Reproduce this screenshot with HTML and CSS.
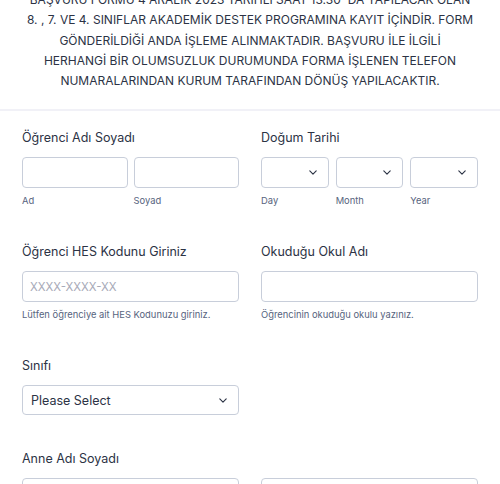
FILE: index.html
```html
<!doctype html>
<html>
	<head>
		<meta charset="utf-8">
		<link rel="stylesheet" href="styles.css">
	</head>
	<body>
		<div class="intro">
			<p>BAŞVURU FORMU 4 ARALIK 2023 TARİHLİ SAAT 13.30' DA YAPILACAK OLAN<br>8. , 7. VE 4. SINIFLAR AKADEMİK DESTEK PROGRAMINA KAYIT İÇİNDİR. FORM<br>GÖNDERİLDİĞİ ANDA İŞLEME ALINMAKTADIR. BAŞVURU İLE İLGİLİ<br>HERHANGİ BİR OLUMSUZLUK DURUMUNDA FORMA İŞLENEN TELEFON<br>NUMARALARINDAN KURUM TARAFINDAN DÖNÜŞ YAPILACAKTIR.</p>
		</div>
		<div class="form">
			<div class="row">
				<div class="field">
					<label class="label">Öğrenci Adı Soyadı</label>
					<div class="pair">
						<div>
							<div class="box"></div>
							<span class="sub">Ad</span>
						</div>
						<div>
							<div class="box"></div>
							<span class="sub">Soyad</span>
						</div>
					</div>
				</div>
				<div class="field">
					<label class="label">Doğum Tarihi</label>
					<div class="trio">
						<div>
							<div class="box select"><svg class="chev" viewBox="0 0 10 6"><path d="M1 1l4 4 4-4"/></svg></div>
							<span class="sub">Day</span>
						</div>
						<div>
							<div class="box select"><svg class="chev" viewBox="0 0 10 6"><path d="M1 1l4 4 4-4"/></svg></div>
							<span class="sub">Month</span>
						</div>
						<div>
							<div class="box select"><svg class="chev" viewBox="0 0 10 6"><path d="M1 1l4 4 4-4"/></svg></div>
							<span class="sub">Year</span>
						</div>
					</div>
				</div>
			</div>
			<div class="row">
				<div class="field">
					<label class="label">Öğrenci HES Kodunu Giriniz</label>
					<div class="box"><span class="placeholder">XXXX-XXXX-XX</span></div>
					<span class="sub">Lütfen öğrenciye ait HES Kodunuzu giriniz.</span>
				</div>
				<div class="field">
					<label class="label">Okuduğu Okul Adı</label>
					<div class="box"></div>
					<span class="sub">Öğrencinin okuduğu okulu yazınız.</span>
				</div>
			</div>
			<div class="row">
				<div class="field">
					<label class="label">Sınıfı</label>
					<div class="box select wide"><span class="value">Please Select</span><svg class="chev" viewBox="0 0 10 6"><path d="M1 1l4 4 4-4"/></svg></div>
				</div>
			</div>
			<div class="row">
				<div class="field">
					<label class="label">Anne Adı Soyadı</label>
					<div class="box"></div>
				</div>
				<div class="field">
					<label class="label">&nbsp;</label>
					<div class="box"></div>
				</div>
			</div>
		</div>
	</body>
</html>
```

FILE: styles.css
```css
body
{
	margin: 0;
	font-family: Inter, "Noto Sans", sans-serif;
	color: #2c3345;
	background-color: #ffffff;
	overflow: hidden;
}

.intro
{
	margin-top: -10px;
	padding: 0 12px 18px 12px;
	border-bottom: 2px solid #f1f1f7;
}

.intro p
{
	margin: 0;
	font-size: 12px;
	line-height: 20.3px;
	text-align: center;
}

.form
{
	padding: 17px 22px 0 22px;
}

.row
{
	display: grid;
	grid-template-columns: 1fr 1fr;
	column-gap: 22px;
	margin-bottom: 34px;
}

.field
{
	display: flex;
	flex-direction: column;
}

.label
{
	font-size: 12.5px;
	font-weight: 400;
	line-height: 20px;
	margin-bottom: 9px;
}

.pair
{
	display: grid;
	grid-template-columns: 1fr 1fr;
	column-gap: 6px;
}

.trio
{
	display: grid;
	grid-template-columns: 1fr 1fr 1fr;
	column-gap: 7px;
}

.box
{
	box-sizing: border-box;
	height: 31px;
	border: 1px solid #c8ceda;
	border-radius: 4px;
	background-color: #ffffff;
	display: flex;
	align-items: center;
	padding: 0 7px;
}

.select
{
	justify-content: flex-end;
	padding-right: 11px;
}

.wide
{
	justify-content: space-between;
	height: 30px;
	padding-left: 8px;
}

.chev
{
	width: 8px;
	height: 5px;
	fill: none;
	stroke: #2c3345;
	stroke-width: 1.4;
	stroke-linecap: round;
	stroke-linejoin: round;
}

.placeholder
{
	font-size: 11.4px;
	color: #a8aab8;
}

.value
{
	font-size: 12.5px;
	color: #2c3345;
}

.sub
{
	display: block;
	margin-top: 6px;
	font-size: 9.4px;
	line-height: 14px;
	color: #57647e;
}
```
